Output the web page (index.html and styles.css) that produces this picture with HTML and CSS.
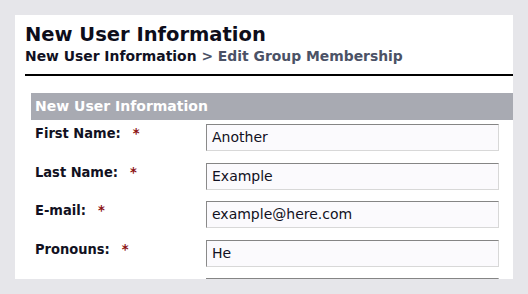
FILE: index.html
```html
<!DOCTYPE html>
<html>
<head>
<meta charset="utf-8">
<link rel="stylesheet" href="styles.css">
</head>
<body>
<div class="panel">
  <h1 class="title">New User Information</h1>
  <div class="crumbs"><span class="current">New User Information</span> <span class="next">&gt; Edit Group Membership</span></div>
  <div class="section">
    <div class="bar">New User Information</div>
    <div class="rows">
      <div class="row"><label class="label">First Name:<span class="req">*</span></label><div class="input">Another</div></div>
      <div class="row"><label class="label">Last Name:<span class="req">*</span></label><div class="input">Example</div></div>
      <div class="row"><label class="label">E-mail:<span class="req">*</span></label><div class="input">example@here.com</div></div>
      <div class="row"><label class="label">Pronouns:<span class="req">*</span></label><div class="input">He</div></div>
      <div class="row"><label class="label">&nbsp;</label><div class="input">&nbsp;</div></div>
    </div>
  </div>
</div>
</body>
</html>
```

FILE: styles.css
```css
html, body {
  margin: 0;
  padding: 0;
}
body {
  background: #e6e6ea;
  padding: 15px;
  font-family: "DejaVu Sans", Verdana, sans-serif;
  color: #111122;
}
.panel {
  background: #ffffff;
  height: 264px;
  overflow: hidden;
  padding: 8px 0 0 10px;
  box-sizing: border-box;
}
.title {
  margin: 0;
  font-size: 19.5px;
  line-height: 24px;
  font-weight: bold;
  color: #0d0d1a;
}
.crumbs {
  font-size: 13.9px;
  line-height: 18px;
  font-weight: bold;
  padding-bottom: 9px;
  border-bottom: 2px solid #000;
}
.crumbs .current {
  color: #111122;
}
.crumbs .next {
  color: #4b5266;
}
.section {
  margin: 17px 0 0 6px;
}
.bar {
  background: #a8aab2;
  color: #ffffff;
  font-size: 14px;
  font-weight: bold;
  height: 27px;
  line-height: 27px;
  padding-left: 4px;
}
.rows {
  padding: 4px 0 0 4px;
  display: flex;
  flex-direction: column;
  gap: 11.5px;
}
.row {
  display: grid;
  grid-template-columns: 171px 293px;
  align-items: start;
}
.label {
  font-family: "DejaVu Sans Condensed", "DejaVu Sans", sans-serif;
  font-size: 14.5px;
  font-weight: bold;
  line-height: 18px;
  padding-top: 0;
  color: #111122;
}
.req {
  color: #8b1010;
  margin-left: 12px;
}
.input {
  box-sizing: border-box;
  height: 27px;
  background: #fbfafd;
  border: 1px solid;
  border-color: #858585 #d8d8d8 #d8d8d8 #8a8a8a;
  font-size: 14px;
  line-height: 25px;
  padding-left: 5px;
  color: #111122;
}
```
